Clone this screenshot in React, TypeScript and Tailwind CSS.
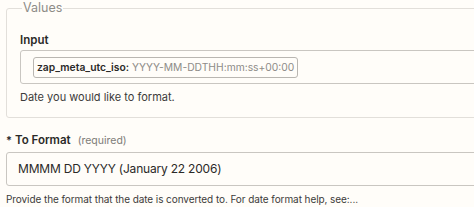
export default function App() {
  return (
    <div className="w-[474px] h-[207px] overflow-hidden bg-[#fffdf9] text-[#2b2a28] font-['Inter',sans-serif]">
      <div className="w-[560px] pl-[6px]">
        <fieldset className="border border-[#e2dfda] rounded-[3px] px-[13px] pb-[13px]">
          <legend className="ml-[2px] px-[1px] text-[12.5px] leading-[16px] text-[#8e8c88]">Values</legend>
          <div className="pt-[17px] text-[11.5px] font-semibold leading-[14px]">Input</div>
          <div className="mt-[3px] h-[34px] border border-[#c9c6c1] rounded-[3px] flex items-center pl-[12px]">
            <span className="h-[21px] flex items-center border border-[#b9b6b1] rounded-[3px] px-[3px] text-[10.3px] leading-none">
              <span className="font-semibold text-[#2b2a28]">zap_meta_utc_iso:</span>
              <span className="ml-[3px] text-[#8e8c88]">YYYY-MM-DDTHH:mm:ss+00:00</span>
            </span>
          </div>
          <div className="mt-[6px] text-[11px] leading-[14px] text-[#3c3b39]">Date you would like to format.</div>
        </fieldset>
        <div className="mt-[14px] flex items-baseline text-[10.5px] leading-[16px]">
          <span className="font-semibold text-[11px]">*</span>
          <span className="ml-[3px] font-semibold text-[11.5px]">To Format</span>
          <span className="ml-[7px] text-[#7e7c78]">(required)</span>
        </div>
        <div className="mt-[3px] h-[34px] border border-[#c9c6c1] rounded-[3px] flex items-center pl-[11px] text-[12px] tracking-[-0.2px]">
          MMMM DD YYYY (January 22 2006)
        </div>
        <div className="mt-[6px] text-[10px] tracking-[-0.08px] leading-[14px] text-[#3c3b39]">
          Provide the format that the date is converted to. For date format help, see:...
        </div>
      </div>
    </div>
  );
}
